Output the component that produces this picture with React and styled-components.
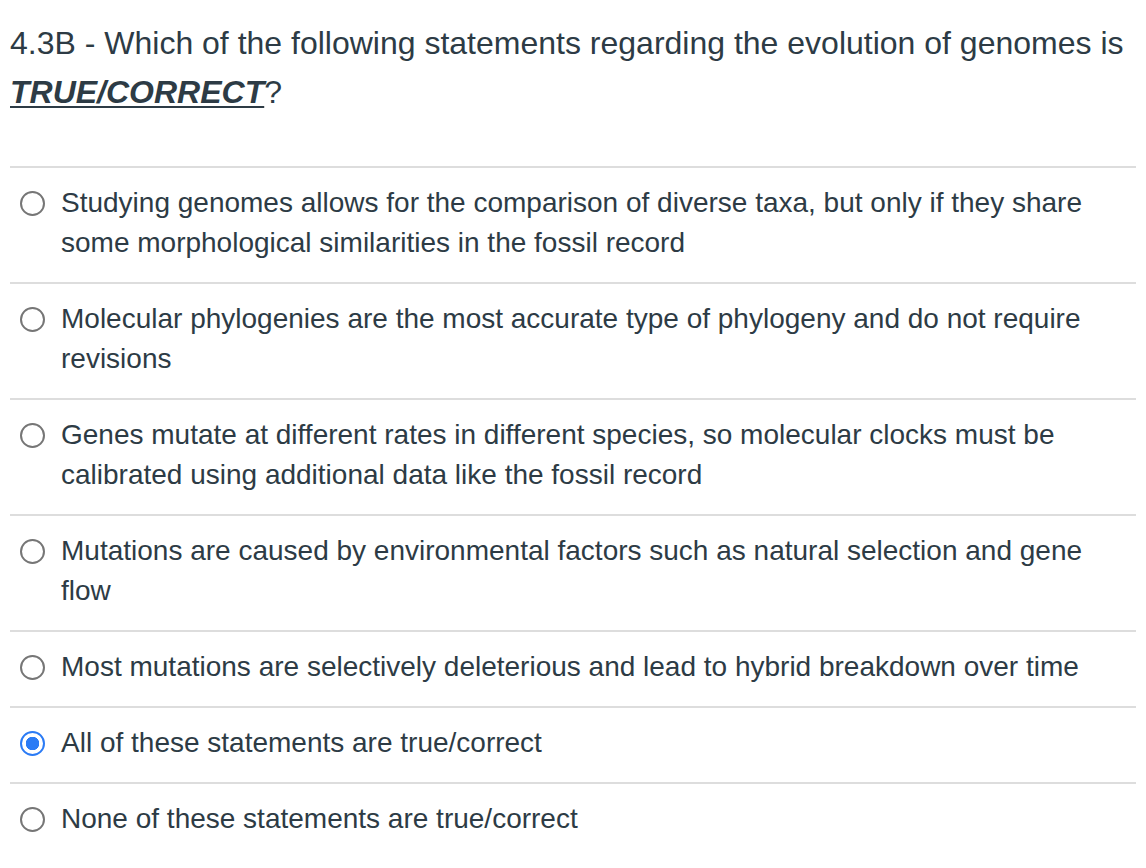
import styled, { createGlobalStyle } from 'styled-components';

const GlobalStyle = createGlobalStyle`
  html, body {
    margin: 0;
    padding: 0;
    background: #ffffff;
  }
  body {
    font-family: 'Liberation Sans', Arial, Helvetica, sans-serif;
    color: #2d3b45;
  }
`;

const answers = [
  {
    text: 'Studying genomes allows for the comparison of diverse taxa, but only if they share some morphological similarities in the fossil record',
  },
  {
    text: 'Molecular phylogenies are the most accurate type of phylogeny and do not require revisions',
  },
  {
    text: 'Genes mutate at different rates in different species, so molecular clocks must be calibrated using additional data like the fossil record',
  },
  {
    text: 'Mutations are caused by environmental factors such as natural selection and gene flow',
  },
  {
    text: 'Most mutations are selectively deleterious and lead to hybrid breakdown over time',
  },
  { text: 'All of these statements are true/correct', selected: true },
  { text: 'None of these statements are true/correct' },
];

const App = () => {
  return (
    <Page>
      <GlobalStyle />
      <Question>
        4.3B - Which of the following statements regarding the evolution of genomes is{' '}
        <Emph>TRUE/CORRECT</Emph>?
      </Question>
      <AnswerList>
        {answers.map((a, i) => (
          <Answer key={i}>
            <Radio $selected={a.selected} />
            <AnswerText>{a.text}</AnswerText>
          </Answer>
        ))}
      </AnswerList>
    </Page>
  );
};
export default App;

const Page = styled.div`
  padding: 19px 10px 0 10px;
  width: 1126px;
`;

const Question = styled.div`
  font-size: 32px;
  line-height: 49px;
  color: #2d3b45;
`;

const Emph = styled.span`
  font-weight: 700;
  font-style: italic;
  text-decoration: underline;
  text-underline-offset: 3px;
  text-decoration-thickness: 2px;
`;

const AnswerList = styled.div`
  margin-top: 49px;
`;

const Answer = styled.label`
  display: flex;
  align-items: flex-start;
  gap: 16px;
  border-top: 2px solid #dddddd;
  padding: 15px 0 19px 10px;
  cursor: pointer;
`;

const Radio = styled.span`
  flex: none;
  box-sizing: border-box;
  width: 25px;
  height: 25px;
  margin-top: 8px;
  border-radius: 50%;
  border: 2px solid ${(p) => (p.$selected ? '#2b7bf5' : '#767676')};
  background: ${(p) =>
    p.$selected ? 'radial-gradient(circle, #2b7bf5 0 6.5px, #ffffff 7px)' : '#ffffff'};
`;

const AnswerText = styled.span`
  font-size: 28px;
  line-height: 40px;
  color: #2d3b45;
`;
